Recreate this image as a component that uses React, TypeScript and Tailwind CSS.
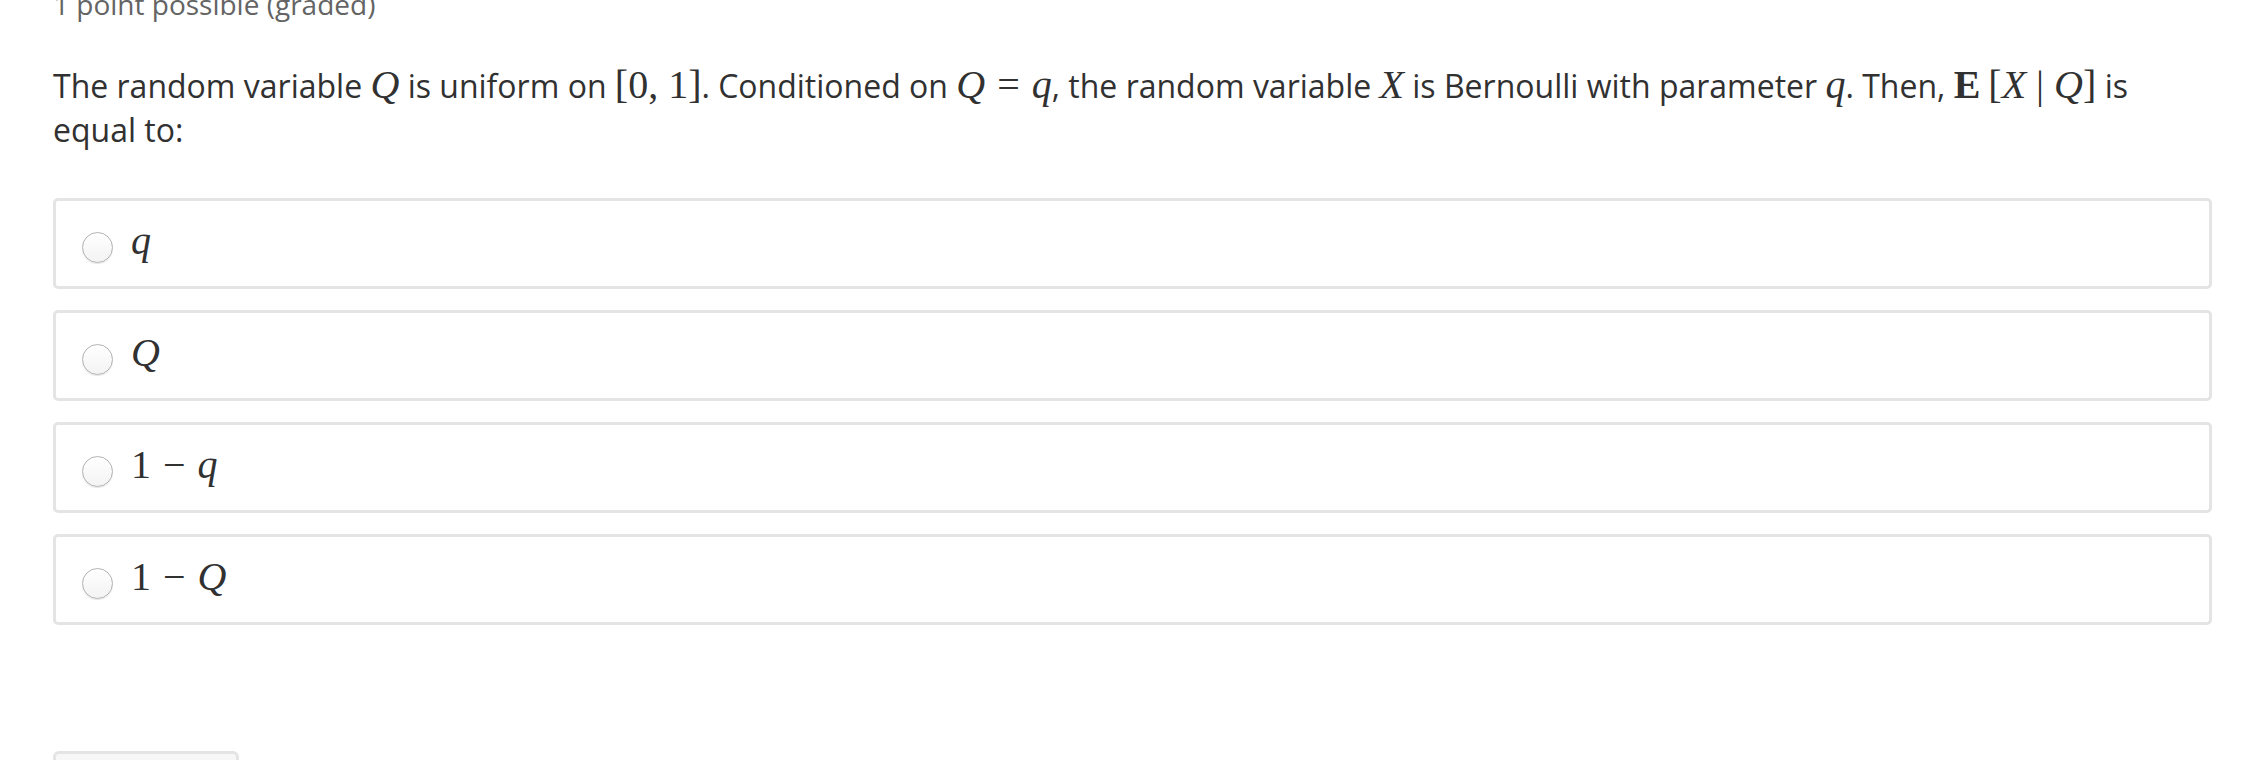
import type { ReactNode } from "react";

function M({ children }: { children: ReactNode }) {
  return (
    <span className="font-['Liberation_Serif',serif] text-[40px] leading-none">
      {children}
    </span>
  );
}

function Radio() {
  return (
    <span className="h-[31px] w-[31px] shrink-0 rounded-full border-[1.5px] border-[#b3b3b3] bg-gradient-to-b from-white to-[#f3f3f3] shadow-[0_1px_1px_rgba(0,0,0,0.1)]" />
  );
}

const Minus = () => <span className="mx-[12px]">−</span>;

const options: ReactNode[] = [
  <i>q</i>,
  <i>Q</i>,
  <>
    1<Minus />
    <i>q</i>
  </>,
  <>
    1<Minus />
    <i>Q</i>
  </>,
];

export default function App() {
  return (
    <div className="flex min-h-screen flex-col items-start bg-white pl-[53px] pr-[36px] font-['Open_Sans',sans-serif] text-[#313131]">
      {/* Header */}
      <div className="-mt-[10px] text-[28px] leading-[28px] text-[#646464]">
        1 point possible (graded)
      </div>

      <p className="mt-[46px] text-[32px] leading-[44px]">
        The random variable{" "}
        <M>
          <i>Q</i>
        </M>{" "}
        is uniform on <M>[0, 1]</M>. Conditioned on{" "}
        <M>
          <i>Q</i>
          <span className="mx-[12px]">=</span>
          <i>q</i>
        </M>
        , the random variable{" "}
        <M>
          <i>X</i>
        </M>{" "}
        is Bernoulli with parameter{" "}
        <M>
          <i>q</i>
        </M>
        . Then,{" "}
        <M>
          <b>E</b>
          <span className="ml-[8px]">[</span>
          <i>X</i>
          <span className="mx-[10px]">|</span>
          <i>Q</i>]
        </M>{" "}
        is equal to:
      </p>

      <div className="mt-[46px] flex w-full flex-col gap-[21px]">
        {options.map((opt, i) => (
          <label
            key={i}
            className="flex h-[91px] items-center gap-[18px] rounded-[5px] border-[3px] border-[#e4e4e4] bg-white pl-[26px] pt-[8px]"
          >
            <Radio />
            <span className="mb-[14px] font-['Liberation_Serif',serif] text-[40px] leading-none">
              {opt}
            </span>
          </label>
        ))}
      </div>

      <button
        type="button"
        className="mt-[126px] h-[72px] w-[186px] rounded-[6px] border-[3px] border-[#e4e4e4] bg-[#f7f7f7] pt-[40px] text-[28px] text-[#313131]"
      >
        Submit
      </button>
    </div>
  );
}
